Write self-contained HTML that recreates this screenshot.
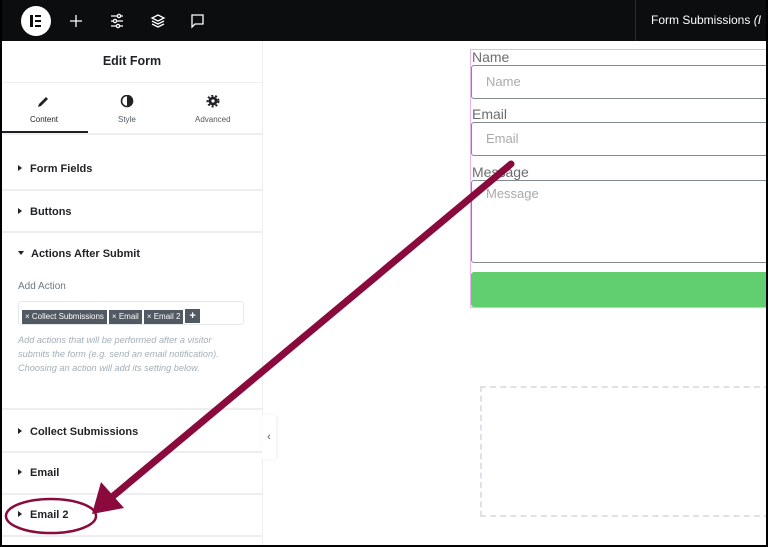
<!DOCTYPE html>
<html><head><meta charset="utf-8"><style>
*{margin:0;padding:0;box-sizing:border-box}
body{width:768px;height:547px;overflow:hidden;background:#000;font-family:"Liberation Sans",sans-serif;position:relative}
.a{position:absolute}
.sep{position:absolute;left:2px;width:260px;height:2px;background:#eceef0}
.sec{position:absolute;left:18px;font-size:11px;font-weight:bold;color:#1f2124}
.tri{display:inline-block;width:0;height:0;border-left:4px solid #1f2124;border-top:3px solid transparent;border-bottom:3px solid transparent;margin-right:8px;vertical-align:1px}
.lbl{position:absolute;left:472px;font-size:14px;color:#6d6d6d}
.inp{position:absolute;left:471px;width:300px;border:1px solid #818a91;border-radius:3px;background:#fff;color:#aaa;font-size:13px;padding-left:14px}
.tag{display:inline-block;background:#515962;color:#fff;font-size:8px;padding:2px 3px;margin-right:2px;height:14px;line-height:10px}
</style></head><body>
<div class="a" style="left:2px;top:41px;width:764px;height:504px;background:#fff"></div>
<div class="a" style="left:0;top:0;width:768px;height:41px;background:#0c0d0e"></div>
<div class="a" style="left:635px;top:0;width:1px;height:41px;background:#2a2c2f"></div>
<div class="a" style="left:651px;top:13px;color:#fff;font-size:12px">Form Submissions <i>(I</i></div>
<div class="a" style="left:21px;top:6px;width:30px;height:30px;border-radius:50%;background:#fff"></div>
<div class="a" style="left:30px;top:15px;width:3px;height:12px;background:#0c0d0e"></div>
<div class="a" style="left:35px;top:15px;width:6px;height:2px;background:#0c0d0e"></div>
<div class="a" style="left:35px;top:20px;width:6px;height:2px;background:#0c0d0e"></div>
<div class="a" style="left:35px;top:25px;width:6px;height:2px;background:#0c0d0e"></div>
<svg class="a" style="left:60px;top:8px" width="160" height="26" fill="none" stroke="#fff" stroke-width="1.3">
<path d="M16 7v12M10 13h12"/>
<path d="M51 8h12M51 13h12M51 18h12"/><circle cx="59" cy="8" r="1.6" fill="#0c0d0e"/><circle cx="55" cy="13" r="1.6" fill="#0c0d0e"/><circle cx="58" cy="18" r="1.6" fill="#0c0d0e"/>
<path d="M98 7l6 3-6 3-6-3z M92 13l6 3 6-3 M92 16l6 3 6-3"/>
<path d="M132 7h11v9h-8l-3 3z"/>
</svg>
<div class="a" style="left:262px;top:41px;width:1px;height:504px;background:#eceef0"></div>
<div class="a" style="left:2px;top:54px;width:260px;text-align:center;font-size:12.5px;font-weight:bold;color:#1f2124">Edit Form</div>
<div class="sep" style="top:82px;height:1px"></div>
<svg class="a" style="left:36px;top:95px" width="200" height="14">
<path d="M2 12l1-3 7-7 2 2-7 7z" fill="#1f2124"/>
<circle cx="91" cy="6" r="5.5" fill="none" stroke="#1f2124" stroke-width="1.6"/><path d="M91 1a5 5 0 0 1 0 10z" fill="#1f2124"/>
<circle cx="177" cy="6" r="4.5" fill="#1f2124"/><circle cx="177" cy="6" r="5.5" fill="none" stroke="#1f2124" stroke-width="2" stroke-dasharray="2 2"/><circle cx="177" cy="6" r="1.6" fill="#fff"/>
</svg>
<div class="a" style="left:30px;top:115px;font-size:8px;color:#1f2124">Content</div>
<div class="a" style="left:118px;top:115px;font-size:8px;color:#515962">Style</div>
<div class="a" style="left:195px;top:115px;font-size:8px;color:#515962">Advanced</div>
<div class="a" style="left:2px;top:131px;width:86px;height:2px;background:#1f2124"></div>
<div class="sep" style="top:133px"></div>
<div class="sec" style="top:163px"><span class="tri"></span>Form Fields</div>
<div class="sep" style="top:189px"></div>
<div class="sec" style="top:206px"><span class="tri"></span>Buttons</div>
<div class="sep" style="top:231px"></div>
<div class="sec" style="top:248px"><span style="display:inline-block;border-top:4px solid #1f2124;border-left:3px solid transparent;border-right:3px solid transparent;margin-right:7px;vertical-align:2px"></span>Actions After Submit</div>
<div class="a" style="left:18px;top:281px;font-size:10px;color:#6d7882">Add Action</div>
<div class="a" style="left:18px;top:301px;width:226px;height:24px;border:1px solid #e6e8ea;border-radius:3px;padding:4px 3px">
<span class="tag">× Collect Submissions</span><span class="tag">× Email</span><span class="tag">× Email 2</span><span class="tag" style="font-size:11px;padding:2px 4px;font-weight:bold">+</span></div>
<div class="a" style="left:18px;top:333px;width:222px;font-size:9.2px;line-height:14px;font-style:italic;color:#a4afb7">Add actions that will be performed after a visitor submits the form (e.g. send an email notification). Choosing an action will add its setting below.</div>
<div class="sep" style="top:408px"></div>
<div class="sec" style="top:426px"><span class="tri"></span>Collect Submissions</div>
<div class="sep" style="top:451px"></div>
<div class="sec" style="top:467px"><span class="tri"></span>Email</div>
<div class="sep" style="top:493px"></div>
<div class="sec" style="top:509px"><span class="tri"></span>Email 2</div>
<div class="sep" style="top:535px"></div>
<div class="a" style="left:262px;top:415px;width:14px;height:44px;background:#fff;box-shadow:1px 0 3px rgba(0,0,0,.08);color:#555;font-size:11px;line-height:44px;text-align:center">‹</div>
<div class="a" style="left:470px;top:49px;width:300px;height:259px;border:1px solid #e9b5f0"></div>
<div class="lbl" style="top:49px">Name</div>
<div class="inp" style="top:65px;height:34px;line-height:32px">Name</div>
<div class="lbl" style="top:106px">Email</div>
<div class="inp" style="top:122px;height:34px;line-height:32px">Email</div>
<div class="lbl" style="top:164px">Message</div>
<div class="inp" style="top:180px;height:83px;padding-top:5px">Message</div>
<div class="a" style="left:471px;top:272px;width:300px;height:35px;background:#61ce70;border-radius:3px"></div>
<div class="a" style="left:480px;top:386px;width:290px;height:131px;border:2px dashed #dfe1e4"></div>
<div class="a" style="left:766px;top:0;width:2px;height:547px;background:#000"></div>
<div class="a" style="left:0;top:0;width:2px;height:547px;background:#000"></div>
<div class="a" style="left:0;top:545px;width:768px;height:2px;background:#000"></div>
<svg class="a" style="left:0;top:0" width="768" height="547">
<line x1="511" y1="164" x2="112" y2="497" stroke="#8a0a3e" stroke-width="7" stroke-linecap="round"/>
<path d="M92 514 L101 482 L124 508 Z" fill="#8a0a3e"/>
<ellipse cx="51" cy="516" rx="45" ry="17" fill="none" stroke="#8a0a3e" stroke-width="2.5"/>
</svg>
</body></html>
